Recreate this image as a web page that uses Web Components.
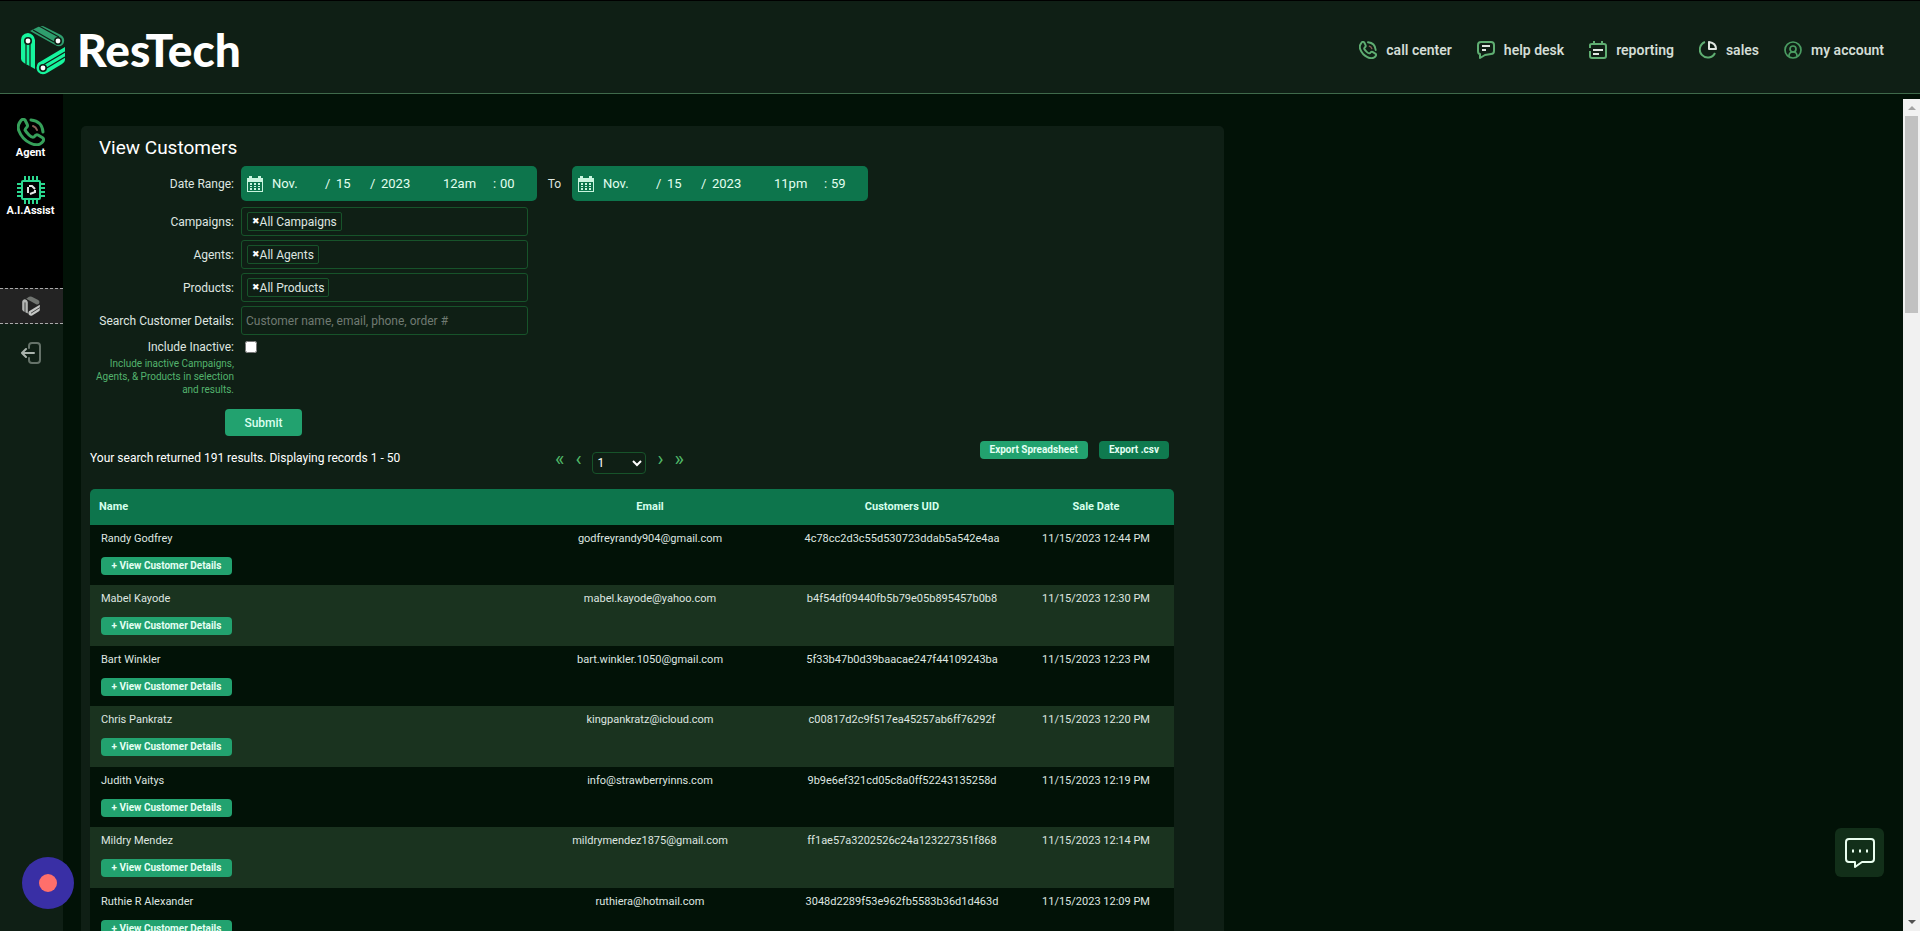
<!DOCTYPE html>
<html lang="en">
<head>
<meta charset="utf-8">
<meta name="viewport" content="width=device-width, initial-scale=1">
<title>ResTech - View Customers</title>
<style>
:root{
    --page:#021207;
    --bar:#0f1f15;
    --line:#17532a;
    --green:#0d754c;
    --mint:#22a26f;
    --text:#dfe6e0;
}
html,body{
    height:100%;
}
body{
    margin:0;
    background:var(--page);
    color:var(--text);
    font-family:Roboto,"Liberation Sans",sans-serif;
    font-size:12px;
}
</style>
</head>
<body>
<res-app></res-app>

<script>
// shorthand: attach an open root and clone the markup in
function define(name, html, setup) {
    const template = document.createElement('template');
    template.innerHTML = html;
    customElements.define(name, class extends HTMLElement {
        constructor() {
            super();
            this.attachShadow({mode:'open'});
        }
        connectedCallback() {
            if (this.shadowRoot.hasChildNodes()) return;
            this.shadowRoot.appendChild(template.content.cloneNode(true));
            if (setup) setup.call(this, this.shadowRoot);
        }
    });
}

const icons = {
    logo: `<svg viewBox="0 0 44 50">
        <path d="M9 6 17 2Q21 0 24 2L40 10Q44 13 43 17Q42 22 36 21Z" fill="#2f9e6e"/>
        <path d="M12 5 33 17M18 1 38 12" stroke="#0f1f16" stroke-width="1.2"/>
        <path d="M0 15Q0 9 7 8Q13 9 14 15V44L3 38Q0 36 0 34Z" fill="#16f59d"/>
        <path d="M5 18V39M9 18V42" stroke="#0f1f16" stroke-width="1.2"/>
        <path d="M44 22V35Q44 37 41 39L26 48Q21 51 17 47Q14 43 17 38Z" fill="#16f59d"/>
        <path d="M22 40 44 27M24 44 44 32" stroke="#0f1f16" stroke-width="1.2"/>
        <circle cx="7" cy="16" r="4" fill="#0f1f16"/><circle cx="7" cy="16" r="2.4" fill="#fff"/>
        <circle cx="37" cy="16" r="4" fill="#0f1f16"/><circle cx="37" cy="16" r="2.4" fill="#fff"/>
        <circle cx="22" cy="43" r="4" fill="#0f1f16"/><circle cx="22" cy="43" r="2.4" fill="#fff"/></svg>`,
    hex: `<svg viewBox="0 0 44 50">
        <path d="M10 7 17 2Q21 0 24 2L40 10Q44 13 43 17Q42 22 36 21Z" fill="#707470"/>
        <path d="M0 15Q0 9 7 8Q13 9 14 15V44L3 38Q0 36 0 34Z" fill="#b4b6b4"/>
        <path d="M44 22V35Q44 37 41 39L26 48Q21 51 17 47Q14 43 17 38Z" fill="#c4c6c4"/>
        <path d="M7 16V41M22 43 44 29" stroke="#232323" stroke-width="2"/></svg>`,
    phone: `<svg viewBox="0 0 28 28" fill="none" stroke="currentColor" stroke-linecap="round" stroke-linejoin="round">
        <path d="M8 2Q5 0 3 4Q0 8 2 13Q5 21 13 25Q19 28 23 26Q28 23 26 20L21 17Q19 16 17 19Q15 20 12 17Q9 14 8 12Q8 11 10 9Q11 8 10 6Z"/>
        <path d="M14 2Q25 3 26 14"/><path d="M16 8Q19 9 20 12" stroke="var(--accent,#8a5f58)" stroke-width="2"/></svg>`,
    help: `<svg viewBox="0 0 18 18" fill="none" stroke="#5fae72" stroke-width="2" stroke-linejoin="round">
        <path d="M4 1H14Q17 1 17 4V10Q17 13 14 13L8 14 3 17V13Q1 13 1 10V4Q1 1 4 1Z"/>
        <path d="M5 5H13M5 9H9" stroke="#dfe6e0"/></svg>`,
    report: `<svg viewBox="0 0 18 18" fill="none" stroke="#5fae72" stroke-width="2" stroke-linejoin="round">
        <path d="M1 7V4Q1 3 3 3H15Q17 3 17 5V15Q17 17 15 17H3Q1 17 1 15V10M5 0V4M13 0V4"/>
        <path d="M4 9H14M4 13H10" stroke="#dfe6e0"/></svg>`,
    sales: `<svg viewBox="0 0 18 18" fill="none" stroke="#5fae72" stroke-width="2">
        <path d="M6 1A8 8 0 1 0 16 12"/><path d="M10 1V8H17Q17 2 10 1Z" stroke="#dfe6e0" stroke-linejoin="round"/></svg>`,
    account: `<svg viewBox="0 0 18 18" fill="none" stroke="#4a9c62" stroke-width="1.7">
        <circle cx="9" cy="9" r="8"/><circle cx="9" cy="8" r="3"/><path d="M5 15Q5 11 9 11Q13 11 13 15"/></svg>`,
    chip: `<svg viewBox="0 0 28 28" fill="none" stroke="#2bd990" stroke-width="2">
        <rect x="5" y="5" width="18" height="18" rx="1"/>
        <path d="M8 0V5M12 0V5M16 0V5M20 0V5M8 23V28M12 23V28M16 23V28M20 23V28M0 8H5M0 12H5M0 16H5M0 20H5M23 8H28M23 12H28M23 16H28M23 20H28"/>
        <path d="M11 17V11M12 10 15 10 18 13M13 18 18 16V14" stroke="#e6e6e6"/></svg>`,
    exit: `<svg viewBox="0 0 20 22" fill="none" stroke-width="2" stroke-linecap="round">
        <path d="M8 6V4Q8 1 11 1H16Q19 1 19 4V18Q19 21 16 21H11Q8 21 8 18V16" stroke="#657269"/>
        <path d="M13 11H1M5 7 1 11 5 15" stroke="#a9b3ac"/></svg>`,
    calendar: `<svg viewBox="0 0 16 16" fill="#c9f5df"><path fill-rule="evenodd" d="M0 2H2V0H5V2H11V0H14V2H16V16H0ZM1 6V15H15V6Z"/>
        <path d="M3 7h2v2H3zM7 7h2v2H7zM11 7h2v2h-2zM3 10h2v1H3zM7 10h2v1H7zM11 10h2v1h-2zM3 12h2v2H3zM7 12h2v2H7zM11 12h2v2h-2z"/></svg>`,
    chat: `<svg viewBox="0 0 30 30" fill="none" stroke="#eafff0" stroke-width="2" stroke-linejoin="round">
        <path d="M4 1H26Q29 1 29 4V21Q29 24 26 24H17L10 29V24H4Q1 24 1 21V4Q1 1 4 1Z"/>
        <path d="M7 13H9M14 13H16M21 13H23" stroke-width="3"/></svg>`
};

define('res-icon', `
<style>
:host{ display:block; flex:none; }
svg{ display:block; width:100%; height:100%; }
</style>`, function (root) {
    root.innerHTML += icons[this.getAttribute('name')];
});

define('nav-link', `
<style>
a{
    display:flex;
    align-items:center;
    gap:9px;
    color:#d3ddd5;
    font-size:14px;
    font-weight:600;
    line-height:18px;
    text-decoration:none;
}
res-icon{
    width:18px;
    height:18px;
    color:#5fae72;
    stroke-width:3px;
}
</style>
<a href="#"><slot></slot></a>`, function (root) {
    const icon = document.createElement('res-icon');
    icon.setAttribute('name', this.getAttribute('icon'));
    root.querySelector('a').prepend(icon);
});

define('res-header', `
<style>
:host{
    display:flex;
    justify-content:space-between;
    height:92px;
    padding:0 36px 0 21px;
    background:var(--bar);
    border-top:1px solid #000;
    border-bottom:1px solid #3f6a4b;
}
.brand{
    display:flex;
    align-items:center;
    gap:12px;
    padding-top:6px;
    color:#fff;
    font:900 46px/50px Lato,"Liberation Sans",sans-serif;
    text-decoration:none;
}
.brand res-icon{ width:44px; height:50px; }
nav{ display:flex; align-items:flex-start; gap:25px; padding-top:40px; }
</style>
<a class="brand" href="#"><res-icon name="logo"></res-icon><span>ResTech</span></a>
<nav>
    <nav-link icon="phone">call center</nav-link>
    <nav-link icon="help">help desk</nav-link>
    <nav-link icon="report">reporting</nav-link>
    <nav-link icon="sales">sales</nav-link>
    <nav-link icon="account">my account</nav-link>
</nav>`);

define('side-bar', `
<style>
:host{
    display:flex;
    flex-direction:column;
    width:63px;
    background:var(--bar);
}
.tools{
    display:flex;
    flex-direction:column;
    gap:16px;
    height:170px;
    padding-top:24px;
    background:#000;
}
a{
    display:flex;
    flex-direction:column;
    align-items:center;
    padding-right:2px;
    color:#fff;
    font-size:11px;
    font-weight:700;
    line-height:14px;
    text-decoration:none;
}
.tools res-icon{
    width:28px;
    height:28px;
    color:#36a05a;
    stroke-width:3px;
}
.mini{
    padding-top:7px;
    padding-bottom:7px;
    background:#232323;
    border-top:1px dashed #aaa;
    border-bottom:1px dashed #aaa;
}
.mini res-icon{ width:18px; height:20px; }
.exit{ padding-top:18px; }
.exit res-icon{ width:20px; height:22px; }
</style>
<div class="tools">
    <a href="#"><res-icon name="phone"></res-icon>Agent</a>
    <a href="#"><res-icon name="chip"></res-icon>A.I.Assist</a>
</div>
<a class="mini" href="#" aria-label="Dashboard"><res-icon name="hex"></res-icon></a>
<a class="exit" href="#" aria-label="Log out"><res-icon name="exit"></res-icon></a>`);

define('date-field', `
<style>
:host{
    display:flex;
    align-items:center;
    box-sizing:border-box;
    width:296px;
    height:35px;
    padding:0 6px;
    background:var(--green);
    border-radius:5px;
    color:#e2fff0;
    font-size:13px;
}
res-icon{ width:16px; height:16px; margin-right:9px; }
select{
    appearance:none;
    padding:0;
    border:0;
    background:none;
    color:inherit;
    font:inherit;
    line-height:20px;
}
span{ width:11px; }
.m{ width:53px; }
.d{ width:34px; }
.y{ width:62px; }
.h{ width:50px; }
.n{ width:30px; }
.c{ width:7px; }
</style>
<res-icon name="calendar"></res-icon>
<select class="m" aria-label="Month"><option>Nov.</option></select><span>/</span>
<select class="d" aria-label="Day"><option>15</option></select><span>/</span>
<select class="y" aria-label="Year"><option>2023</option></select>
<select class="h" aria-label="Hour"><option></option></select><span class="c">:</span>
<select class="n" aria-label="Minute"><option></option></select>`, function (root) {
    root.querySelector('.h option').textContent = this.getAttribute('hour');
    root.querySelector('.n option').textContent = this.getAttribute('minute');
});

define('tag-field', `
<style>
:host{
    display:flex;
    align-items:center;
    box-sizing:border-box;
    width:287px;
    height:29px;
    padding:0 5px;
    border:1px solid var(--line);
    border-radius:3px;
}
span{
    display:flex;
    align-items:center;
    height:17px;
    padding:0 4px;
    border:1px solid var(--line);
    border-radius:2px;
}
button{
    padding:0;
    border:0;
    background:none;
    color:#fff;
    font:700 9px/17px "DejaVu Sans",sans-serif;
}
</style>
<span><button type="button" aria-label="Remove">✖</button><slot></slot></span>`);

define('search-form', `
<style>
:host{ display:block; }
form{
    display:grid;
    grid-template-columns:144px 1fr;
    column-gap:7px;
    row-gap:4px;
    align-items:center;
}
label,.label{
    text-align:right;
    line-height:16px;
    white-space:nowrap;
}
.dates{ display:flex; align-items:center; margin-bottom:2px; }
.dates span{ width:35px; text-align:center; }
.first{ margin-bottom:2px; }
#q{
    box-sizing:border-box;
    width:287px;
    height:29px;
    padding:0 4px;
    border:1px solid var(--line);
    border-radius:3px;
    background:none;
    color:inherit;
    font:inherit;
}
#q::placeholder{ color:#6f7a72; }
#inactive{ display:block; width:12px; height:12px; margin:0 4px; }
small{
    display:block;
    padding-top:2px;
    color:#53b36d;
    font-size:10px;
    line-height:13px;
    white-space:normal;
}
.submit{
    width:77px;
    height:27px;
    margin:13px 0 0 135px;
    border:0;
    border-radius:4px;
    background:var(--mint);
    color:#dcfff0;
    font:500 12px/16px Roboto,"Liberation Sans",sans-serif;
}
.tick{ align-self:start; padding-top:2px; }
</style>
<form>
    <div class="label first">Date Range:</div>
    <div class="dates"><date-field hour="12am" minute="00"></date-field><span>To</span><date-field hour="11pm" minute="59"></date-field></div>
    <div class="label">Campaigns:</div><tag-field>All Campaigns</tag-field>
    <div class="label">Agents:</div><tag-field>All Agents</tag-field>
    <div class="label">Products:</div><tag-field>All Products</tag-field>
    <label for="q">Search Customer Details:</label><input id="q" type="text" placeholder="Customer name, email, phone, order #">
    <label for="inactive">Include Inactive:<small>Include inactive Campaigns, Agents, &amp; Products in selection and results.</small></label>
    <div class="tick"><input id="inactive" type="checkbox"></div>
</form>
<button class="submit" type="button">Submit</button>`);

define('result-bar', `
<style>
:host{
    display:grid;
    grid-template-columns:465px 1fr auto;
    align-items:center;
    height:53px;
    padding-right:5px;
}
p{ margin:0; color:#fff; line-height:16px; padding-bottom:10px; }
.pager{ display:flex; align-items:flex-start; gap:11px; }
.pager a{
    color:#4fb868;
    font-size:20px;
    line-height:14px;
    text-decoration:none;
}
select{
    width:54px;
    height:22px;
    border:1px solid var(--line);
    border-radius:4px;
    background:none;
    color:#fff;
    font:12px Roboto,"Liberation Sans",sans-serif;
}
.export{ display:flex; gap:11px; align-self:start; padding-top:5px; }
button{
    height:18px;
    padding:0 10px;
    border:0;
    border-radius:4px;
    background:var(--mint);
    color:#e4fff3;
    font:700 10px/16px Roboto,"Liberation Sans",sans-serif;
}
.csv{ background:#0f7a4f; }
</style>
<p>Your search returned 191 results. Displaying records 1 - 50</p>
<div class="pager">
    <a href="#">«</a><a href="#">‹</a>
    <select aria-label="Page"><option>1</option></select>
    <a href="#">›</a><a href="#">»</a>
</div>
<div class="export"><button type="button">Export Spreadsheet</button><button class="csv" type="button">Export .csv</button></div>`);

const customers = [
    ['Randy Godfrey', 'godfreyrandy904@gmail.com', '4c78cc2d3c55d530723ddab5a542e4aa', '11/15/2023 12:44 PM'],
    ['Mabel Kayode', 'mabel.kayode@yahoo.com', 'b4f54df09440fb5b79e05b895457b0b8', '11/15/2023 12:30 PM'],
    ['Bart Winkler', 'bart.winkler.1050@gmail.com', '5f33b47b0d39baacae247f44109243ba', '11/15/2023 12:23 PM'],
    ['Chris Pankratz', 'kingpankratz@icloud.com', 'c00817d2c9f517ea45257ab6ff76292f', '11/15/2023 12:20 PM'],
    ['Judith Vaitys', 'info@strawberryinns.com', '9b9e6ef321cd05c8a0ff52243135258d', '11/15/2023 12:19 PM'],
    ['Mildry Mendez', 'mildrymendez1875@gmail.com', 'ff1ae57a3202526c24a123227351f868', '11/15/2023 12:14 PM'],
    ['Ruthie R Alexander', 'ruthiera@hotmail.com', '3048d2289f53e962fb5583b36d1d463d', '11/15/2023 12:09 PM']
];

define('customer-table', `
<style>
:host{ display:block; }
table{
    width:100%;
    border-collapse:separate;
    border-spacing:0;
    table-layout:fixed;
    font-size:11px;
    line-height:14px;
    text-align:center;
}
.email{ width:272px; }
.uid{ width:232px; }
.date{ width:156px; }
th{
    height:36px;
    padding:0;
    background:var(--green);
    color:#d6ffec;
    font-weight:700;
}
th:first-child{ padding-left:9px; text-align:left; border-radius:5px 0 0 0; }
th:last-child{ border-radius:0 5px 0 0; }
td{
    height:53px;
    padding:7px 0 0;
    vertical-align:top;
    background:#021207;
}
td:first-child{ padding-left:11px; text-align:left; }
tbody tr:nth-child(even) td{
    background:#1a331f;
    border-bottom:1px solid #1a331f;
}
button{
    display:block;
    width:131px;
    height:18px;
    margin-top:11px;
    padding:0;
    border:0;
    border-radius:4px;
    background:var(--mint);
    color:#e4fff3;
    font:700 10px/16px Roboto,"Liberation Sans",sans-serif;
}
</style>
<table>
    <colgroup><col><col class="email"><col class="uid"><col class="date"></colgroup>
    <thead><tr><th>Name</th><th>Email</th><th>Customers UID</th><th>Sale Date</th></tr></thead>
    <tbody></tbody>
</table>`, function (root) {
    root.querySelector('tbody').innerHTML = customers.map(([name, email, uid, date]) =>
        `<tr><td>${name}<button type="button">+ View Customer Details</button></td><td>${email}</td><td>${uid}</td><td>${date}</td></tr>`
    ).join('');
});

define('scroll-track', `
<style>
:host{
    display:flex;
    flex-direction:column;
    align-items:center;
    box-sizing:border-box;
    width:17px;
    margin-top:5px;
    padding:7px 0;
    background:#f1f1f1;
}
.up,.down{ border:4px solid transparent; }
.up{ border-top:0; border-bottom-color:#a3a3a3; }
.down{ border-bottom:0; border-top-color:#505050; margin-top:auto; }
.thumb{ width:13px; height:197px; margin-top:6px; background:#c1c1c1; }
</style>
<div class="up"></div><div class="thumb"></div><div class="down"></div>`);

define('res-app', `
<style>
:host{
    display:flex;
    flex-direction:column;
    height:100vh;
    overflow:hidden;
}
.body{
    display:flex;
    flex:1;
    min-height:0;
}
main{
    flex:1;
    min-width:0;
    padding:32px 18px 0;
    overflow:hidden;
}
section{
    box-sizing:border-box;
    max-width:1143px;
    padding:10px 50px 0 9px;
    background:var(--bar);
    border-radius:5px 5px 0 0;
}
h1{
    margin:0 0 6px;
    padding-left:9px;
    color:#fff;
    font-size:19px;
    font-weight:400;
    line-height:24px;
}
/* floating over the page corners */
.record,.chat{
    position:fixed;
    display:flex;
    align-items:center;
    justify-content:center;
    padding:0;
    border:0;
}
.record{
    left:22px;
    bottom:22px;
    width:52px;
    height:52px;
    border-radius:50%;
    background:#392fa5;
}
.record i{ width:18px; height:18px; border-radius:50%; background:#ff6f6b; }
.chat{
    right:36px;
    bottom:54px;
    width:49px;
    height:49px;
    border-radius:6px;
    background:#122f19;
}
.chat res-icon{ width:30px; height:30px; }
</style>
<res-header></res-header>
<div class="body">
    <side-bar></side-bar>
    <main>
        <section>
            <h1>View Customers</h1>
            <search-form></search-form>
            <result-bar></result-bar>
            <customer-table></customer-table>
        </section>
    </main>
    <scroll-track></scroll-track>
</div>
<button class="record" type="button" aria-label="Record"><i></i></button>
<button class="chat" type="button" aria-label="Open chat"><res-icon name="chat"></res-icon></button>`);
</script>
</body>
</html>
